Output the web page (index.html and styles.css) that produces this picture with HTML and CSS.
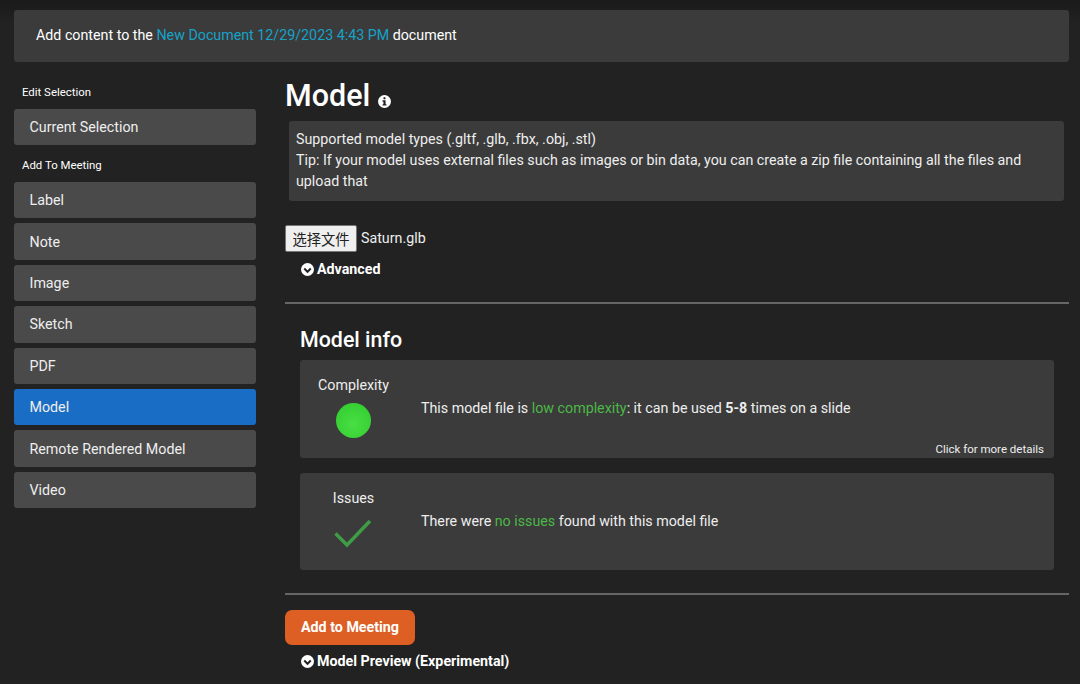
FILE: index.html
```html
<!DOCTYPE html>
<html lang="en">
<head>
  <meta charset="UTF-8">
  <title>Add to Meeting</title>
  <link rel="stylesheet" href="styles.css">
</head>
<body>

  <div class="banner">
    Add content to the <a href="#" class="doc-link">New Document 12/29/2023 4:43 PM</a> document
  </div>

  <div class="layout">
    <div class="sidebar">
      <div class="side-label">Edit Selection</div>
      <button class="side-btn first">Current Selection</button>
      <div class="side-label second">Add To Meeting</div>
      <button class="side-btn">Label</button>
      <button class="side-btn">Note</button>
      <button class="side-btn">Image</button>
      <button class="side-btn">Sketch</button>
      <button class="side-btn">PDF</button>
      <button class="side-btn active">Model</button>
      <button class="side-btn">Remote Rendered Model</button>
      <button class="side-btn">Video</button>
    </div>

    <div class="main">
      <h1>Model
        <svg class="info-icon" viewBox="0 0 16 16">
          <circle cx="8" cy="8" r="8" fill="#fff"/>
          <rect x="6.700" y="2.800" width="2.600" height="2.500" rx="0.600" fill="#222"/>
          <path d="M5.600 6.500h3.700v4.800h1.100v1.700H5.600v-1.700h1.100V8.200H5.600z" fill="#222"/>
        </svg>
      </h1>

      <div class="tip">
        Supported model types (.gltf, .glb, .fbx, .obj, .stl)<br>
        Tip: If your model uses external files such as images or bin data, you can create a zip file containing all the files and upload that
      </div>

      <div class="file-row">
        <span class="file-btn">选择文件</span>
        <span>Saturn.glb</span>
      </div>

      <div class="toggle advanced">
        <svg class="chevron" viewBox="0 0 16 16">
          <circle cx="8" cy="8" r="8" fill="#fff"/>
          <path d="M4 6.800 8 10.800l4-4" fill="none" stroke="#222" stroke-width="2.400"/>
        </svg>
        Advanced
      </div>

      <hr class="rule">

      <div class="info">
        <h2>Model info</h2>

        <div class="info-card">
          <div class="info-side">
            <div>Complexity</div>
            <div class="dot"></div>
          </div>
          <div class="info-text">This model file is <span class="good">low complexity</span>: it can be used <b>5-8</b> times on a slide</div>
          <div class="more">Click for more details</div>
        </div>

        <div class="info-card issues">
          <div class="info-side">
            <div>Issues</div>
            <svg class="check" viewBox="0 0 38 30">
              <path d="M1.500 14.500 13 26 36 2" fill="none" stroke="#3f9b45" stroke-width="3.500"/>
            </svg>
          </div>
          <div class="info-text">There were <span class="good">no issues</span> found with this model file</div>
        </div>
      </div>

      <hr class="rule lower">

      <button class="add-btn">Add to Meeting</button>

      <div class="toggle preview">
        <svg class="chevron" viewBox="0 0 16 16">
          <circle cx="8" cy="8" r="8" fill="#fff"/>
          <path d="M4 6.800 8 10.800l4-4" fill="none" stroke="#222" stroke-width="2.400"/>
        </svg>
        Model Preview (Experimental)
      </div>
    </div>
  </div>

</body>
</html>
```

FILE: styles.css
```css
html, body {
  height: 100%;
}
body {
  margin: 0;
  padding: 10px 11px 0 14px;
  box-sizing: border-box;
  overflow: hidden;
  background: linear-gradient(#1a1a1a, #222 24px);
  color: #eee;
  font-family: Roboto, Arial, sans-serif;
  font-size: 14.250px;
  line-height: 21px;
}
.banner {
  height: 52px;
  padding: 0 22px;
  line-height: 50px;
  background-color: #3b3b3b;
  border-radius: 3px;
  color: #fff;
}
.doc-link {
  color: #17a2c8;
  text-decoration: none;
}
.layout {
  display: flex;
  margin-top: 21px;
}
.sidebar {
  width: 242px;
  margin-right: 29px;
  flex-shrink: 0;
}
.side-label {
  height: 21px;
  padding-left: 8px;
  font-size: 11.400px;
  line-height: 19px;
  color: #fff;
}
.side-label.second {
  margin-top: 10px;
  margin-bottom: 6px;
  line-height: 20px;
}
.side-btn {
  display: block;
  width: 100%;
  height: 36.400px;
  margin-bottom: 5px;
  padding: 0 15.500px;
  border: none;
  border-radius: 3px;
  background-color: #4a4a4a;
  color: #eee;
  font-family: inherit;
  font-size: 14.250px;
  text-align: left;
}
.side-btn.first {
  height: 36px;
  margin-top: 5px;
}
.side-btn.active {
  background-color: #1a6dc4;
}
.main {
  flex: 1;
  min-width: 0;
}
h1 {
  margin: 0;
  height: 38px;
  font-size: 30.500px;
  font-weight: 500;
  line-height: 25px;
  color: #fff;
}
.info-icon {
  width: 13px;
  height: 13px;
  vertical-align: -2px;
}
.tip {
  margin: 0 5px 0 4px;
  padding: 8px 8px 9px 7px;
  background-color: #3b3b3b;
  border-radius: 3px;
}
.file-row {
  display: flex;
  align-items: center;
  gap: 4px;
  margin-top: 24px;
}
.file-btn {
  width: 72px;
  height: 27px;
  box-sizing: border-box;
  border: 1px solid #767676;
  border-radius: 2px;
  background-color: #efefef;
  color: #222;
  font-family: "Noto Sans CJK SC", sans-serif;
  font-size: 14.300px;
  line-height: 25px;
  text-align: center;
}
.toggle {
  display: flex;
  align-items: center;
  gap: 3px;
  margin-left: 16px;
  font-weight: 700;
  color: #fff;
}
.toggle.advanced {
  margin-top: 7px;
}
.chevron {
  width: 13px;
  height: 13px;
}
.rule {
  height: 2px;
  margin: 22px 0 0;
  border: none;
  background-color: #666;
}
.rule.lower {
  margin-top: 23px;
}
.info {
  padding: 0 15px 0 15px;
}
h2 {
  margin: 22px 0 7px;
  height: 27px;
  font-size: 21.400px;
  font-weight: 500;
  line-height: 27px;
  color: #fff;
}
.info-card {
  position: relative;
  display: flex;
  align-items: center;
  height: 98px;
  background-color: #3b3b3b;
  border-radius: 3px;
}
.info-card.issues {
  height: 97px;
  margin-top: 15px;
}
.info-side {
  width: 107px;
  margin-right: 14px;
  text-align: center;
  align-self: flex-start;
  padding-top: 15px;
  color: #eee;
}
.dot {
  width: 35px;
  height: 35px;
  margin: 7px auto 0;
  border-radius: 50%;
  background: radial-gradient(circle at 50% 60%, #48de44, #30cb2c);
}
.check {
  display: block;
  width: 38px;
  height: 30px;
  margin: 10px auto 0 34px;
}
.info-text {
  margin-bottom: 2px;
}
.issues .info-text {
  margin-top: 1px;
}
.good {
  color: #4cb847;
}
.more {
  position: absolute;
  right: 10px;
  bottom: 1px;
  font-size: 11.500px;
  line-height: 16px;
}
.add-btn {
  display: block;
  width: 130px;
  height: 35px;
  margin-top: 15px;
  padding-bottom: 2px;
  border: none;
  border-radius: 7px;
  background-color: #dd5f24;
  color: #fff;
  font-family: inherit;
  font-size: 14.250px;
  font-weight: 700;
}
.toggle.preview {
  margin-top: 6px;
}
```
